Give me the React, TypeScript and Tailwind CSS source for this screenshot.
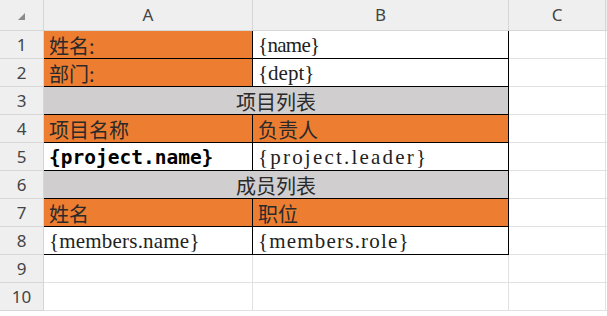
import React from 'react';

type Cell = { text: string; kind?: 'cjk' | 'tpl' | 'bold'; track?: string };
type Row = { a?: Cell; b?: Cell; merged?: string; fill?: 'orange' | 'white' | 'gray' };

// the template strings are monospaced in the original; tracking is tuned per string to keep their widths
const rows: Row[] = [
  { a: { text: '姓名:', kind: 'cjk' }, b: { text: '{name}', kind: 'tpl', track: 'tracking-[-0.7px]' }, fill: 'orange' },
  { a: { text: '部门:', kind: 'cjk' }, b: { text: '{dept}', kind: 'tpl', track: 'tracking-[0px]' }, fill: 'orange' },
  { merged: '项目列表', fill: 'gray' },
  { a: { text: '项目名称', kind: 'cjk' }, b: { text: '负责人', kind: 'cjk' }, fill: 'orange' },
  { a: { text: '{project.name}', kind: 'bold' }, b: { text: '{project.leader}', kind: 'tpl', track: 'tracking-[2.2px]' }, fill: 'white' },
  { merged: '成员列表', fill: 'gray' },
  { a: { text: '姓名', kind: 'cjk' }, b: { text: '职位', kind: 'cjk' }, fill: 'orange' },
  {
    a: { text: '{members.name}', kind: 'tpl', track: 'tracking-[0.2px]' },
    b: { text: '{members.role}', kind: 'tpl', track: 'tracking-[1.2px]' },
    fill: 'white',
  },
  {},
  {},
];

const textClass = (kind?: Cell['kind']) => {
  if (kind === 'tpl') return "font-['Liberation_Serif',serif] text-[21px] text-[#222]";
  if (kind === 'bold') return "font-['DejaVu_Sans_Mono',monospace] font-bold text-[19.5px] text-black";
  return "font-['Noto_Sans_CJK_SC',sans-serif] text-[20px] text-[#2a2a2a]";
};

const Text: React.FC<{ cell: Cell }> = ({ cell }) => (
  <span className={`${textClass(cell.kind)} ${cell.track ?? ''} leading-none pt-[2px]`}>{cell.text}</span>
);

export default function App() {
  return (
    <div className="w-[607px] h-[316px] overflow-hidden bg-white select-none">
      {/* column headers */}
      <div className="flex h-[31px] bg-[#efefef] border-b border-[#d6d6d6] box-border font-['Noto_Sans',sans-serif] text-[17px] text-[#444]">
        <div className="w-[44px] h-full border-r border-[#d6d6d6] box-border relative">
          <svg width="44" height="30" className="absolute left-0 top-0">
            <polygon points="25,13 25,20 18,20" fill="#8a8a8a" />
          </svg>
        </div>
        <div className="w-[209px] h-full border-r border-[#d6d6d6] box-border flex items-center justify-center">A</div>
        <div className="w-[256px] h-full border-r border-[#d6d6d6] box-border flex items-center justify-center">B</div>
        <div className="w-[97px] h-full border-r border-[#d6d6d6] box-border flex items-center justify-center">C</div>
        <div className="flex-1" />
      </div>

      {rows.map((r, i) => {
        const filled = !!r.fill;
        const line = filled ? 'border-black' : 'border-[#e1e1e1]';
        return (
          <div key={i} className="flex h-[28px]">
            <div className="w-[44px] h-full bg-[#efefef] border-r border-b border-[#d6d6d6] box-border flex items-center justify-center font-['Noto_Sans',sans-serif] text-[17px] text-[#444]">
              {i + 1}
            </div>
            {r.merged ? (
              <div className="w-[465px] h-full box-border border-r border-b border-black bg-[#d0cece] flex items-center justify-center">
                <Text cell={{ text: r.merged, kind: 'cjk' }} />
              </div>
            ) : (
              <>
                <div className={`w-[209px] h-full box-border border-r border-b flex items-center pl-[5px] whitespace-nowrap overflow-hidden ${line} ${r.fill === 'orange' ? 'bg-[#ed7d31]' : 'bg-white'}`}>
                  {r.a && <Text cell={r.a} />}
                </div>
                <div className={`w-[256px] h-full box-border border-r border-b flex items-center pl-[5px] whitespace-nowrap overflow-hidden ${line} ${r.fill === 'orange' && r.b?.kind === 'cjk' ? 'bg-[#ed7d31]' : 'bg-white'}`}>
                  {r.b && <Text cell={r.b} />}
                </div>
              </>
            )}
            <div className="w-[97px] h-full box-border border-r border-b border-[#e1e1e1]" />
            <div className="flex-1 h-full box-border border-b border-[#e1e1e1]" />
          </div>
        );
      })}
    </div>
  );
}
